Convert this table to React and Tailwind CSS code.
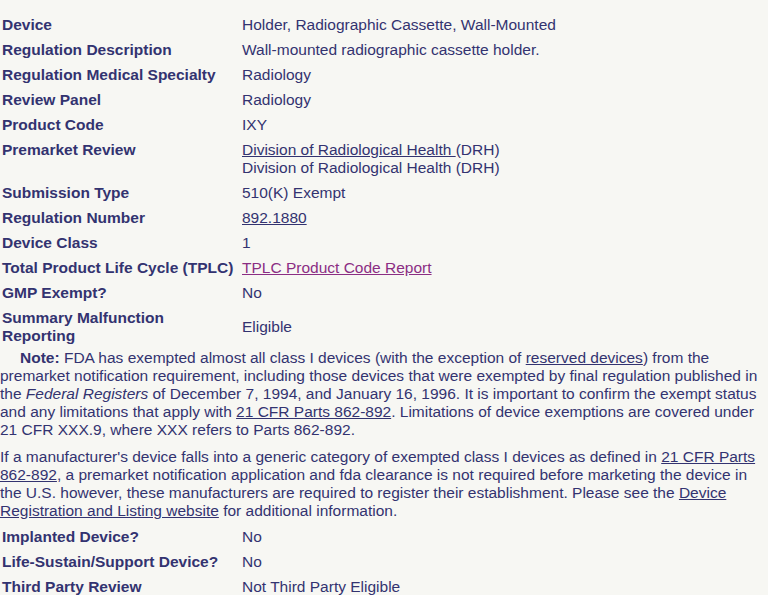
const rowsTop = [
  { label: "Device", value: "Holder, Radiographic Cassette, Wall-Mounted" },
  { label: "Regulation Description", value: "Wall-mounted radiographic cassette holder." },
  { label: "Regulation Medical Specialty", value: "Radiology" },
  { label: "Review Panel", value: "Radiology" },
  { label: "Product Code", value: "IXY" },
  {
    label: "Premarket Review",
    value: (
      <>
        <a href="#" className="underline">Division of Radiological Health </a>(DRH)
        <br />
        Division of Radiological Health (DRH)
      </>
    ),
  },
  { label: "Submission Type", value: "510(K) Exempt" },
  { label: "Regulation Number", value: <a href="#" className="underline">892.1880</a> },
  { label: "Device Class", value: "1" },
  {
    label: "Total Product Life Cycle (TPLC)",
    value: <a href="#" className="underline text-[#8b2e83]">TPLC Product Code Report</a>,
  },
  { label: "GMP Exempt?", value: "No" },
  {
    label: (
      <>
        Summary Malfunction
        <br />
        Reporting
      </>
    ),
    value: "Eligible",
  },
];

const rowsBottom = [
  { label: "Implanted Device?", value: "No" },
  { label: "Life-Sustain/Support Device?", value: "No" },
  { label: "Third Party Review", value: "Not Third Party Eligible" },
];

function Row({ label, value }) {
  return (
    <div className="flex pt-[4px] pb-[3px]">
      <div className="w-[242px] shrink-0 self-start pl-[2px] font-bold">{label}</div>
      <div className="self-center">{value}</div>
    </div>
  );
}

export default function App() {
  return (
    <div
      className="min-h-[595px] w-[768px] bg-[#f7f7f3] pt-[12px] text-[15.5px] leading-[18px] text-[#333370] overflow-hidden"
      style={{ fontFamily: '"Liberation Sans", Arial, sans-serif' }}
    >
      {rowsTop.map((r, i) => (
        <Row key={i} {...r} />
      ))}

      <p className="mt-[1px] whitespace-nowrap">
        <span className="pl-[20px] font-bold">Note:</span> FDA has exempted almost all class I devices (with the exception of{" "}
        <a href="#" className="underline">reserved devices</a>) from the
        <br />
        premarket notification requirement, including those devices that were exempted by final regulation published in
        <br />
        the <i>Federal Registers</i> of December 7, 1994, and January 16, 1996. It is important to confirm the exempt status
        <br />
        and any limitations that apply with <a href="#" className="underline">21 CFR Parts 862-892</a>. Limitations of device exemptions are covered under
        <br />
        21 CFR XXX.9, where XXX refers to Parts 862-892.
      </p>

      <p className="mt-[9px] mb-[4px] whitespace-nowrap">
        If a manufacturer's device falls into a generic category of exempted class I devices as defined in{" "}
        <a href="#" className="underline">21 CFR Parts</a>
        <br />
        <a href="#" className="underline">862-892</a>, a premarket notification application and fda clearance is not required before marketing the device in
        <br />
        the U.S. however, these manufacturers are required to register their establishment. Please see the{" "}
        <a href="#" className="underline">Device</a>
        <br />
        <a href="#" className="underline">Registration and Listing website</a> for additional information.
      </p>

      {rowsBottom.map((r, i) => (
        <Row key={i} {...r} />
      ))}
    </div>
  );
}
